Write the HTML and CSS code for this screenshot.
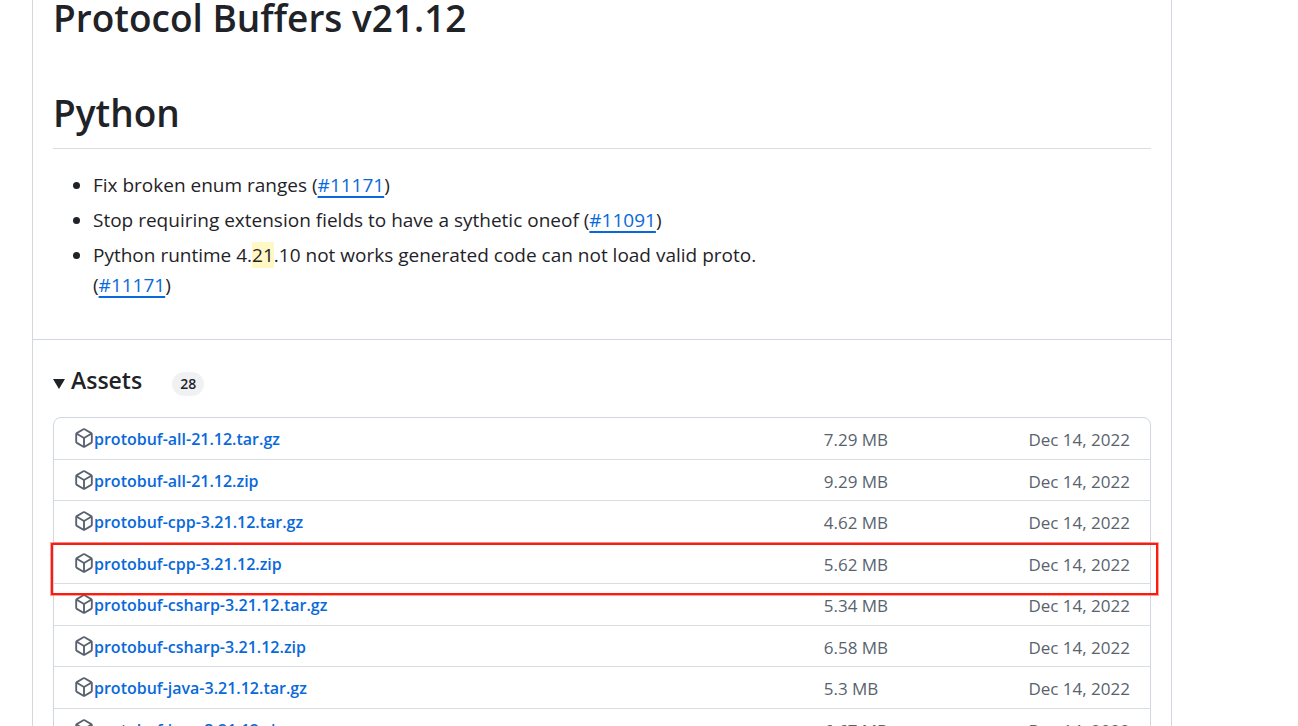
FILE: index.html
```html
<!doctype html>
<html lang="en">
  <head>
    <meta charset="UTF-8" />
    <meta name="viewport" content="width=device-width, initial-scale=1.0" />
    <title>Protocol Buffers v21.12</title>
    <link rel="stylesheet" href="styles.css">
  </head>
  <body>
    <svg class="sprite" aria-hidden="true">
      <symbol id="icon-package" viewBox="0 0 16 16">
        <path d="m8.878.392 5.25 3.045c.54.314.872.89.872 1.514v6.098a1.75 1.75 0 0 1-.872 1.514l-5.25 3.045a1.75 1.75 0 0 1-1.756 0l-5.25-3.045A1.75 1.75 0 0 1 1 11.049V4.951c0-.624.332-1.201.872-1.514L7.122.392a1.75 1.75 0 0 1 1.756 0ZM7.875 1.69l-4.63 2.685L8 7.133l4.755-2.758-4.63-2.685a.248.248 0 0 0-.25 0ZM2.5 5.677v5.372c0 .09.047.171.125.216l4.625 2.683V8.432Zm6.25 8.271 4.625-2.683a.25.25 0 0 0 .125-.216V5.677L8.75 8.432Z"/>
      </symbol>
    </svg>

    <main class="release">
      <div class="release-body">
        <h1>Protocol Buffers v21.12</h1>
        <h1 class="section-title">Python</h1>
        <ul class="notes">
          <li>Fix broken enum ranges (<a href="#11171">#11171</a>)</li>
          <li>Stop requiring extension fields to have a sythetic oneof (<a href="#11091">#11091</a>)</li>
          <li>Python runtime 4.<mark>21</mark>.10 not works generated code can not load valid proto.<br />(<a href="#11171">#11171</a>)</li>
        </ul>
      </div>

      <details class="assets" open>
        <summary><span class="assets-title">Assets</span><span class="counter">28</span></summary>
        <ul class="asset-list">
          <li>
            <div class="asset-name"><svg class="icon"><use href="#icon-package" /></svg><a href="#">protobuf-all-21.12.tar.gz</a></div>
            <span>7.29 MB</span>
            <span>Dec 14, 2022</span>
          </li>
          <li>
            <div class="asset-name"><svg class="icon"><use href="#icon-package" /></svg><a href="#">protobuf-all-21.12.zip</a></div>
            <span>9.29 MB</span>
            <span>Dec 14, 2022</span>
          </li>
          <li>
            <div class="asset-name"><svg class="icon"><use href="#icon-package" /></svg><a href="#">protobuf-cpp-3.21.12.tar.gz</a></div>
            <span>4.62 MB</span>
            <span>Dec 14, 2022</span>
          </li>
          <li class="highlighted">
            <div class="asset-name"><svg class="icon"><use href="#icon-package" /></svg><a href="#">protobuf-cpp-3.21.12.zip</a></div>
            <span>5.62 MB</span>
            <span>Dec 14, 2022</span>
          </li>
          <li>
            <div class="asset-name"><svg class="icon"><use href="#icon-package" /></svg><a href="#">protobuf-csharp-3.21.12.tar.gz</a></div>
            <span>5.34 MB</span>
            <span>Dec 14, 2022</span>
          </li>
          <li>
            <div class="asset-name"><svg class="icon"><use href="#icon-package" /></svg><a href="#">protobuf-csharp-3.21.12.zip</a></div>
            <span>6.58 MB</span>
            <span>Dec 14, 2022</span>
          </li>
          <li>
            <div class="asset-name"><svg class="icon"><use href="#icon-package" /></svg><a href="#">protobuf-java-3.21.12.tar.gz</a></div>
            <span>5.3 MB</span>
            <span>Dec 14, 2022</span>
          </li>
          <li>
            <div class="asset-name"><svg class="icon"><use href="#icon-package" /></svg><a href="#">protobuf-java-3.21.12.zip</a></div>
            <span>6.67 MB</span>
            <span>Dec 14, 2022</span>
          </li>
        </ul>
      </details>
    </main>
  </body>
</html>
```
FILE: styles.css
```css
* {
  box-sizing: border-box;
}
body {
  margin: 0;
  height: 100vh;
  overflow: hidden;
  font-family: 'Segoe UI', 'Open Sans', 'Noto Sans', sans-serif;
  font-size: 19px;
  line-height: 30px;
  color: #1f2328;
  background-color: #fff;
}
.sprite {
  display: none;
}
a {
  color: #0969da;
  text-decoration: none;
}
.release {
  margin: 0 126px 0 32px;
  border: 1px solid #d0d7de;
  border-top: none;
  border-bottom: none;
}
.release-body {
  padding: 0 20px 39px;
  border-bottom: 1px solid #d0d7de;
}
h1 {
  margin: 0;
  font-size: 37px;
  font-weight: 600;
  line-height: 36px;
}
.section-title {
  margin-top: 52px;
  padding: 7px 0 17px;
  border-bottom: 1px solid #d8dee4;
}
.notes {
  margin: 21px 0 0;
  padding-left: 40px;
}
.notes li + li {
  margin-top: 5px;
}
.notes a {
  text-decoration: underline 2px;
  text-underline-offset: 4px;
}
mark {
  color: inherit;
  background-color: #fff8c5;
}
.assets {
  padding: 25px 20px 0;
}
summary {
  display: flex;
  align-items: baseline;
  cursor: pointer;
}
summary::before {
  content: '';
  margin-right: 6px;
  border: 6px solid transparent;
  border-top: 10px solid #1f2328;
  border-bottom: none;
}
.assets-title {
  margin-right: 30px;
  font-size: 23px;
  font-weight: 600;
}
.counter {
  padding: 0 8px;
  border-radius: 12px;
  font-size: 14px;
  font-weight: 600;
  line-height: 24px;
  background-color: #eff1f3;
}
.asset-list {
  margin: 21px 0 0;
  padding: 0;
  list-style: none;
  border: 1px solid #d0d7de;
  border-radius: 8px;
  font-size: 17px;
  line-height: 1.5;
}
.asset-list li {
  position: relative;
  display: grid;
  grid-template-columns: 71% 1fr auto;
  padding: 9px 20px 6px;
  color: #59636e;
}
.asset-list li + li {
  border-top: 1px solid #d8dee4;
}
.asset-name {
  display: flex;
  font-weight: 600;
}
.asset-name a {
  font-size: 16px;
}
.icon {
  width: 20px;
  height: 20px;
  margin-top: 1px;
  fill: #59636e;
}
/* red frame around the archive to download */
.highlighted::after {
  content: '';
  position: absolute;
  inset: 0 -8px -12px -3px;
  z-index: 1;
  border: 2px solid #ff1a0e;
  box-shadow: 0 0 0 1px rgba(255, 26, 14, 0.4);
}
```
